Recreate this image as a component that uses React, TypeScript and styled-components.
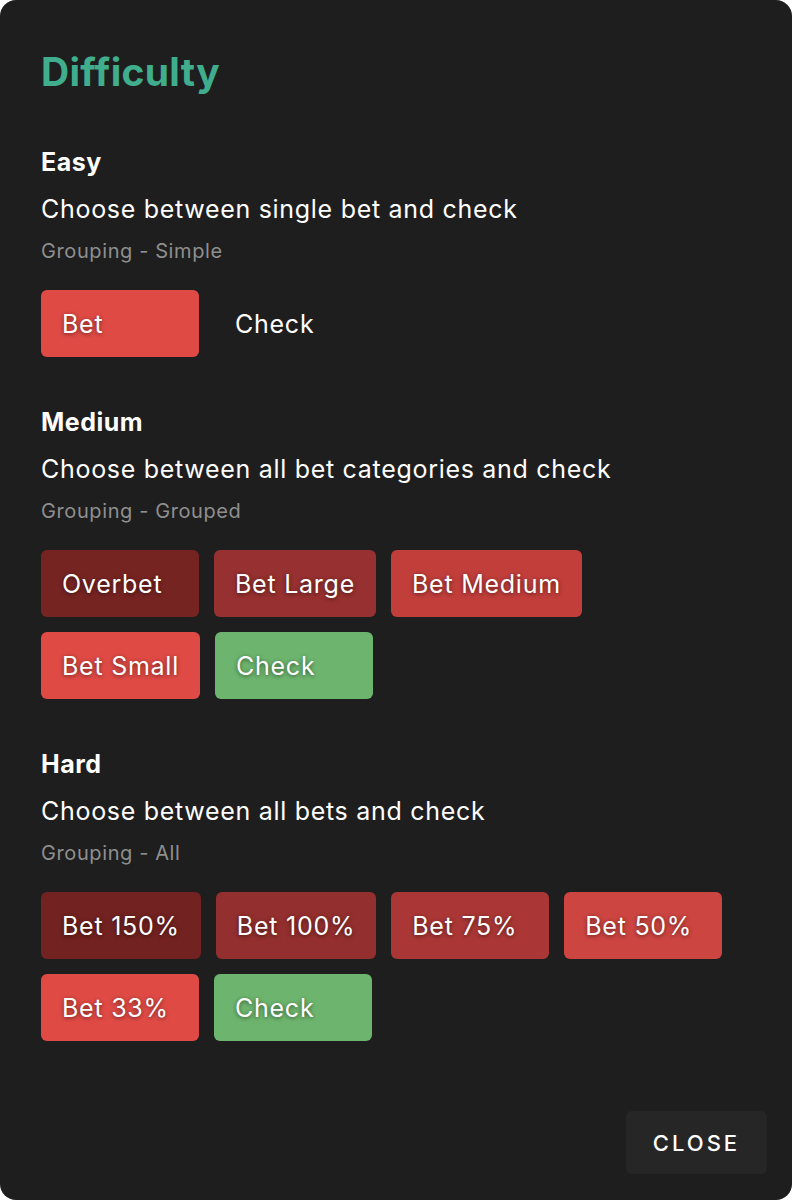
import styled, { createGlobalStyle } from "styled-components";

const GlobalStyle = createGlobalStyle`
  body {
    margin: 0;
    background: #ffffff;
    font-family: Inter, "Noto Sans", sans-serif;
  }
`;

type Choice = { label: string; color: string };

const sections: { name: string; text: string; grouping: string; choices: Choice[] }[] = [
  {
    name: "Easy",
    text: "Choose between single bet and check",
    grouping: "Grouping - Simple",
    choices: [
      { label: "Bet", color: "#e04a45" },
      { label: "Check", color: "transparent" },
    ],
  },
  {
    name: "Medium",
    text: "Choose between all bet categories and check",
    grouping: "Grouping - Grouped",
    choices: [
      { label: "Overbet", color: "#762422" },
      { label: "Bet Large", color: "#973030" },
      { label: "Bet Medium", color: "#c13e3b" },
      { label: "Bet Small", color: "#e04a45" },
      { label: "Check", color: "#6db56e" },
    ],
  },
  {
    name: "Hard",
    text: "Choose between all bets and check",
    grouping: "Grouping - All",
    choices: [
      { label: "Bet 150%", color: "#722220" },
      { label: "Bet 100%", color: "#932f2e" },
      { label: "Bet 75%", color: "#aa3735" },
      { label: "Bet 50%", color: "#cc4541" },
      { label: "Bet 33%", color: "#e04a45" },
      { label: "Check", color: "#6db56e" },
    ],
  },
];

export default function App() {
  return (
    <>
      <GlobalStyle />
      <Dialog>
        <Title>Difficulty</Title>
        {sections.map((s) => (
          <Section key={s.name}>
            <Heading>{s.name}</Heading>
            <Description>{s.text}</Description>
            <Grouping>{s.grouping}</Grouping>
            <ButtonRow>
              {s.choices.map((c) => (
                <ChoiceButton key={c.label} $bg={c.color}>
                  {c.label}
                </ChoiceButton>
              ))}
            </ButtonRow>
          </Section>
        ))}
        <Footer>
          <CloseButton>Close</CloseButton>
        </Footer>
      </Dialog>
    </>
  );
}

const Dialog = styled.div`
  box-sizing: border-box;
  width: 792px;
  height: 1200px;
  background: #1e1e1e;
  border-radius: 16px;
  padding: 48px 25px 26px 41px;
  display: flex;
  flex-direction: column;
  color: #ffffff;
`;

const Title = styled.h1`
  margin: 0;
  font-size: 39px;
  line-height: 48px;
  font-weight: 700;
  letter-spacing: 0.3px;
  color: #40ae8c;
`;

const Section = styled.section`
  display: flex;
  flex-direction: column;
  margin-top: 50px;

  & + & {
    margin-top: 49px;
  }
`;

const Heading = styled.h2`
  margin: 0;
  font-size: 25px;
  line-height: 32px;
  font-weight: 700;
  letter-spacing: 0.5px;
`;

const Description = styled.p`
  margin: 15px 0 0;
  font-size: 25px;
  line-height: 32px;
  font-weight: 400;
  letter-spacing: 0.7px;
`;

const Grouping = styled.p`
  margin: 13px 0 0;
  font-size: 20px;
  line-height: 26px;
  letter-spacing: 0.6px;
  color: #8f8f8f;
`;

const ButtonRow = styled.div`
  display: flex;
  flex-wrap: wrap;
  gap: 15px 15px;
  margin-top: 26px;
  max-width: 700px;
`;

const ChoiceButton = styled.button<{ $bg: string }>`
  box-sizing: border-box;
  min-width: 158px;
  height: 67px;
  padding: 0 21px;
  border: none;
  border-radius: 6px;
  background: ${(p) => p.$bg};
  color: #ffffff;
  font-family: Inter, sans-serif;
  font-size: 25px;
  letter-spacing: 0.75px;
  text-align: left;
  text-shadow: ${(p) => (p.$bg === "transparent" ? "none" : "0 1px 4px rgba(0, 0, 0, 0.55)")};
`;

const Footer = styled.div`
  margin-top: auto;
  display: flex;
  justify-content: flex-end;
`;

const CloseButton = styled.button`
  width: 141px;
  height: 63px;
  border: none;
  border-radius: 6px;
  background: #262626;
  color: #ffffff;
  font-family: Inter, sans-serif;
  font-size: 22px;
  font-weight: 500;
  letter-spacing: 3px;
  text-transform: uppercase;
`;
